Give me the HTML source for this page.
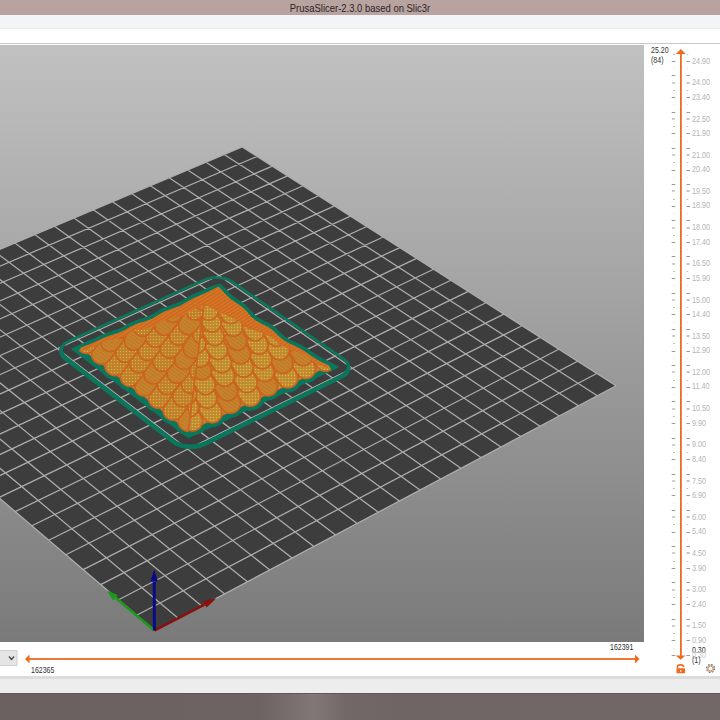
<!DOCTYPE html>
<html><head><meta charset="utf-8">
<style>
*{margin:0;padding:0;box-sizing:border-box}
html,body{width:720px;height:720px;overflow:hidden;background:#fff;font-family:"Liberation Sans",sans-serif}
.abs{position:absolute}
#title{left:0;top:0;width:720px;height:15px;background:#b9a3a1;}
#title span{position:absolute;left:0;width:720px;top:1.6px;text-align:center;font-size:11px;line-height:13px;color:#2a2424;transform:scaleX(.86);transform-origin:360px 0;}
#menu{left:0;top:15px;width:720px;height:13px;background:#f3f4f7}
#tabs{left:0;top:28px;width:720px;height:15px;background:#fff;border-top:1px solid #ececee}
#line{left:0;top:43px;width:720px;height:1px;background:#c9c9c9}
#canvas{left:0;top:45px;width:644px;height:597px;background:linear-gradient(#c1c1c1,#7a7a7a);overflow:hidden}
#right{left:644px;top:45px;width:76px;height:631px;background:#fff}
#bottom{left:0;top:642px;width:644px;height:34px;background:#fff}
#sep{left:0;top:676px;width:720px;height:3px;background:#dcdcdc}
#status{left:0;top:679px;width:720px;height:14px;background:#ededed}
#task{left:0;top:693px;width:720px;height:27px;background:linear-gradient(90deg,#6c6161 0%,#6e6363 36%,#776d6d 40%,#827878 43.5%,#7d7373 45%,#726868 48%,#6f6565 55%,#726868 100%);border-top:1px solid #5f5656}
.tl{position:absolute;left:692px;font-size:9px;line-height:11px;color:#b4b4b4;transform:scaleX(.8);transform-origin:0 0;white-space:nowrap}
.bl{position:absolute;font-size:9px;line-height:11px;color:#303030;transform:scaleX(.78);transform-origin:0 0;white-space:nowrap}
</style></head><body>
<div id="title" class="abs"><span>PrusaSlicer-2.3.0 based on Slic3r</span></div>
<div id="menu" class="abs"></div>
<div id="tabs" class="abs"></div>
<div id="line" class="abs"></div>
<div id="canvas" class="abs">
<svg class="abs" style="left:0;top:-45px" width="644" height="720" viewBox="0 0 644 720">
<polygon points="155.1,630.9 616.0,385.8 242.2,146.9 -195.5,331.8" fill="#3d3d3d"/>
<path d="M155.1,630.9 L-195.5,331.8 M155.1,630.9 L616.0,385.8 M178.5,618.4 L-173.5,322.6 M136.7,615.2 L596.7,373.5 M201.7,606.1 L-151.8,313.4 M118.6,599.8 L577.6,361.3 M224.7,593.9 L-130.2,304.3 M100.7,584.6 L558.8,349.3 M247.4,581.8 L-108.9,295.3 M83.2,569.6 L540.3,337.4 M269.8,569.9 L-87.8,286.3 M65.8,554.8 L521.9,325.7 M292.0,558.1 L-66.9,277.5 M48.7,540.2 L503.8,314.1 M313.9,546.4 L-46.2,268.8 M31.9,525.8 L485.9,302.7 M335.6,534.9 L-25.7,260.1 M15.2,511.6 L468.3,291.4 M357.1,523.5 L-5.3,251.5 M-1.2,497.6 L450.9,280.3 M378.3,512.2 L14.8,243.0 M-17.3,483.8 L433.6,269.2 M399.3,501.0 L34.7,234.6 M-33.3,470.2 L416.6,258.4 M420.0,490.0 L54.5,226.2 M-49.0,456.8 L399.8,247.6 M440.6,479.1 L74.0,218.0 M-64.6,443.5 L383.2,237.0 M460.9,468.3 L93.4,209.8 M-79.9,430.5 L366.8,226.5 M481.0,457.6 L112.6,201.7 M-95.0,417.6 L350.6,216.1 M500.9,447.0 L131.6,193.6 M-109.9,404.8 L334.6,205.9 M520.6,436.5 L150.5,185.7 M-124.6,392.3 L318.7,195.8 M540.0,426.2 L169.2,177.8 M-139.2,379.9 L303.1,185.8 M559.3,415.9 L187.7,169.9 M-153.5,367.6 L287.6,175.9 M578.4,405.8 L206.0,162.2 M-167.7,355.6 L272.3,166.1 M597.3,395.7 L224.2,154.5 M-181.7,343.6 L257.2,156.4 M616.0,385.8 L242.2,146.9 M-195.5,331.8 L242.2,146.9" stroke="#adadad" stroke-width="1.25" fill="none"/>
<g stroke="#0a765b" stroke-linecap="round"><line x1="232.3" y1="281.9" x2="230.1" y2="280.6" stroke-width="2.64"/><line x1="230.1" y1="280.6" x2="227.5" y2="279.5" stroke-width="2.60"/><line x1="227.5" y1="279.5" x2="224.8" y2="278.6" stroke-width="2.60"/><line x1="224.8" y1="278.6" x2="221.8" y2="278.0" stroke-width="2.60"/><line x1="221.8" y1="278.0" x2="218.7" y2="277.7" stroke-width="2.60"/><line x1="218.7" y1="277.7" x2="215.5" y2="277.6" stroke-width="2.60"/><line x1="215.5" y1="277.6" x2="212.4" y2="277.8" stroke-width="2.60"/><line x1="212.4" y1="277.8" x2="209.4" y2="278.3" stroke-width="2.60"/><line x1="209.4" y1="278.3" x2="206.5" y2="279.1" stroke-width="2.60"/><line x1="206.5" y1="279.1" x2="203.9" y2="280.1" stroke-width="2.60"/><line x1="203.9" y1="280.1" x2="69.5" y2="340.8" stroke-width="2.60"/><line x1="69.5" y1="340.8" x2="67.0" y2="342.1" stroke-width="2.62"/><line x1="67.0" y1="342.1" x2="64.9" y2="343.6" stroke-width="2.70"/><line x1="64.9" y1="343.6" x2="63.2" y2="345.2" stroke-width="2.81"/><line x1="63.2" y1="345.2" x2="62.0" y2="347.0" stroke-width="2.97"/><line x1="62.0" y1="347.0" x2="61.2" y2="348.9" stroke-width="3.20"/><line x1="61.2" y1="348.9" x2="61.0" y2="350.8" stroke-width="3.47"/><line x1="61.0" y1="350.8" x2="61.3" y2="352.7" stroke-width="3.77"/><line x1="61.3" y1="352.7" x2="62.1" y2="354.6" stroke-width="4.05"/><line x1="62.1" y1="354.6" x2="63.4" y2="356.3" stroke-width="4.27"/><line x1="63.4" y1="356.3" x2="65.1" y2="357.9" stroke-width="4.43"/><line x1="65.1" y1="357.9" x2="173.6" y2="441.7" stroke-width="4.49"/><line x1="173.6" y1="441.7" x2="175.9" y2="443.2" stroke-width="4.50"/><line x1="175.9" y1="443.2" x2="178.6" y2="444.5" stroke-width="4.50"/><line x1="178.6" y1="444.5" x2="181.6" y2="445.6" stroke-width="4.50"/><line x1="181.6" y1="445.6" x2="184.9" y2="446.3" stroke-width="4.50"/><line x1="184.9" y1="446.3" x2="188.2" y2="446.7" stroke-width="4.50"/><line x1="188.2" y1="446.7" x2="191.7" y2="446.8" stroke-width="4.50"/><line x1="191.7" y1="446.8" x2="195.1" y2="446.5" stroke-width="4.50"/><line x1="195.1" y1="446.5" x2="198.4" y2="445.9" stroke-width="4.50"/><line x1="198.4" y1="445.9" x2="201.5" y2="445.0" stroke-width="4.50"/><line x1="201.5" y1="445.0" x2="204.4" y2="443.9" stroke-width="4.50"/><line x1="204.4" y1="443.9" x2="341.5" y2="376.4" stroke-width="4.50"/><line x1="341.5" y1="376.4" x2="343.8" y2="375.1" stroke-width="4.50"/><line x1="343.8" y1="375.1" x2="345.7" y2="373.5" stroke-width="4.47"/><line x1="345.7" y1="373.5" x2="347.1" y2="371.8" stroke-width="4.33"/><line x1="347.1" y1="371.8" x2="348.1" y2="369.9" stroke-width="4.13"/><line x1="348.1" y1="369.9" x2="348.6" y2="368.0" stroke-width="3.87"/><line x1="348.6" y1="368.0" x2="348.5" y2="366.1" stroke-width="3.57"/><line x1="348.5" y1="366.1" x2="347.9" y2="364.1" stroke-width="3.29"/><line x1="347.9" y1="364.1" x2="346.9" y2="362.3" stroke-width="3.05"/><line x1="346.9" y1="362.3" x2="345.3" y2="360.5" stroke-width="2.87"/><line x1="345.3" y1="360.5" x2="343.3" y2="358.9" stroke-width="2.74"/><line x1="343.3" y1="358.9" x2="232.3" y2="281.9" stroke-width="2.69"/></g>
<pattern id="texB" width="3" height="3" patternUnits="userSpaceOnUse" patternTransform="rotate(-32)"><rect width="3" height="3" fill="#cc671f"/><rect x="0" y="0" width="3" height="1.2" fill="#d97a29"/></pattern>
<pattern id="tex" width="3" height="3" patternUnits="userSpaceOnUse"><rect width="3" height="3" fill="#c0872d"/><rect x="0" y="0" width="1" height="1" fill="#d6b046"/><rect x="1.5" y="1.5" width="1" height="1" fill="#c8641f"/></pattern>
<pattern id="texR" width="3" height="3" patternUnits="userSpaceOnUse"><rect width="3" height="3" fill="#c29233"/><rect x="0" y="0" width="1" height="1" fill="#d8b648"/><rect x="1.5" y="1.5" width="1" height="1" fill="#c56c22"/></pattern>
<pattern id="tex2" width="3" height="3" patternUnits="userSpaceOnUse" patternTransform="rotate(35)"><rect width="3" height="3" fill="#c2862d"/><rect x="0" y="0" width="3" height="1.1" fill="#c77326"/></pattern>
<g fill="#0a765b" stroke="#0a765b" stroke-width="9" stroke-linejoin="round"><polygon points="188.5,437.2 337.5,367.0 323.6,360.0 316.9,356.4 311.1,352.4 305.4,348.4 298.9,344.8 291.6,341.5 285.1,337.9 280.2,333.6 275.8,329.1 270.4,325.1 263.6,321.7 257.2,318.2 252.3,314.0 248.6,309.4 244.2,305.0 238.7,301.1 233.1,297.4 228.5,293.2 224.5,288.8 220.4,284.4 210.7,287.3 204.3,290.6 197.4,293.5 190.5,296.5 184.5,300.0 178.3,303.5 171.0,306.2 163.5,308.8 157.3,312.3 151.3,316.0 144.1,318.8 136.1,321.1 129.3,324.2 123.1,327.8 116.1,330.8 108.2,333.2 101.0,336.1 94.1,339.3 87.0,342.3 72.5,349.0" stroke-width="2"/><polygon points="199.6,423.4 196.8,427.1 194.5,429.4 191.6,430.8 188.3,431.3 185.1,430.7 182.2,429.2 180.0,426.9 178.5,423.9 178.1,420.7 178.6,417.5 180.2,414.6 183.0,410.9"/><polygon points="183.8,412.4 181.0,416.1 178.8,418.3 176.0,419.7 172.9,420.1 169.8,419.6 167.0,418.1 164.8,415.9 163.5,413.1 163.0,410.0 163.6,406.9 165.0,404.1 167.8,400.4"/><polygon points="168.6,400.8 165.9,404.4 163.7,406.5 161.0,407.8 158.1,408.3 155.1,407.7 152.5,406.3 150.4,404.2 149.1,401.5 148.6,398.6 149.2,395.6 150.6,393.0 153.3,389.3"/><polygon points="154.6,388.6 151.9,392.3 149.8,394.3 147.1,395.6 144.2,396.1 141.2,395.5 138.6,394.2 136.5,392.0 135.2,389.4 134.8,386.4 135.3,383.5 136.7,380.9 139.4,377.2"/><polygon points="140.0,379.0 137.3,382.6 135.2,384.6 132.6,385.9 129.6,386.4 126.7,385.8 124.1,384.5 122.1,382.4 120.8,379.7 120.4,376.8 120.9,373.9 122.2,371.3 124.9,367.7"/><polygon points="125.8,368.0 123.1,371.6 120.8,373.8 118.0,375.2 114.9,375.6 111.8,375.1 109.0,373.6 106.8,371.3 105.4,368.5 104.9,365.3 105.5,362.2 106.9,359.4 109.6,355.9"/><polygon points="112.2,356.6 109.5,360.1 107.3,362.3 104.5,363.7 101.4,364.1 98.3,363.6 95.5,362.1 93.3,359.9 92.0,357.1 91.5,354.0 92.1,350.9 93.5,348.1 96.2,344.6"/><polygon points="198.6,412.0 201.0,416.0 202.2,418.9 202.4,421.9 201.7,424.9 200.1,427.5 197.8,429.5 195.0,430.6 191.9,430.9 188.9,430.2 186.3,428.6 184.4,426.2 181.9,422.2"/><polygon points="218.1,403.9 220.6,407.9 221.7,410.7 222.0,413.8 221.3,416.7 219.6,419.4 217.3,421.4 214.5,422.5 211.4,422.8 208.4,422.0 205.8,420.4 203.8,418.1 201.4,414.1"/><polygon points="236.7,393.9 239.1,397.9 240.3,400.8 240.6,403.9 239.8,407.0 238.2,409.7 235.8,411.8 232.9,413.0 229.7,413.2 226.6,412.5 224.0,410.8 221.9,408.4 219.5,404.5"/><polygon points="256.7,386.8 259.1,390.7 260.3,393.7 260.6,396.8 259.8,399.9 258.2,402.7 255.7,404.7 252.8,405.9 249.6,406.2 246.5,405.4 243.8,403.8 241.7,401.3 239.3,397.4"/><polygon points="273.7,377.4 276.1,381.3 277.2,384.1 277.5,387.1 276.8,390.0 275.2,392.5 272.9,394.5 270.1,395.6 267.2,395.8 264.3,395.1 261.7,393.6 259.8,391.3 257.4,387.4"/><polygon points="294.0,368.9 296.4,372.7 297.6,375.6 297.8,378.7 297.1,381.8 295.4,384.5 293.0,386.5 290.1,387.7 287.0,388.0 283.9,387.2 281.2,385.6 279.2,383.2 276.8,379.4"/><polygon points="311.8,359.7 314.1,363.5 315.3,366.4 315.6,369.5 314.8,372.5 313.2,375.2 310.8,377.2 307.9,378.4 304.8,378.7 301.8,377.9 299.1,376.3 297.1,373.9 294.7,370.1"/></g>
<polygon points="188.5,431.0 329.0,366.0 321.7,362.6 315.0,359.0 309.2,355.0 303.5,351.0 297.0,347.4 289.7,344.1 283.2,340.5 278.3,336.2 273.9,331.7 268.5,327.7 261.7,324.3 255.3,320.8 250.4,316.6 246.7,312.0 242.3,307.6 236.8,303.7 231.2,300.0 226.6,295.8 222.6,291.4 218.5,287.0 212.1,290.2 205.7,293.5 198.8,296.4 191.9,299.4 185.9,302.9 179.7,306.4 172.4,309.1 164.9,311.7 158.7,315.2 152.7,318.9 145.5,321.7 137.5,324.0 130.7,327.1 124.5,330.7 117.5,333.7 109.6,336.1 102.4,339.0 95.5,342.2 88.4,345.2 81.0,348.0" fill="url(#tex)" stroke="#cb631f" stroke-width="1"/>
<clipPath id="cL"><polygon points="218.5,287.0 212.1,290.2 205.7,293.5 198.8,296.4 191.9,299.4 185.9,302.9 179.7,306.4 172.4,309.1 164.9,311.7 158.7,315.2 152.7,318.9 145.5,321.7 137.5,324.0 130.7,327.1 124.5,330.7 117.5,333.7 109.6,336.1 102.4,339.0 95.5,342.2 88.4,345.2 81.0,348.0 76.2,354.4 183.7,439.4 188.5,431.0 204.2,304.2"/></clipPath>
<g clip-path="url(#cL)" stroke="#cb631f" stroke-width="1.7" stroke-linejoin="round"><polygon points="203.9,417.7 196.8,427.1 194.5,429.4 191.6,430.8 188.3,431.3 185.1,430.7 182.2,429.2 180.0,426.9 178.5,423.9 178.1,420.7 178.6,417.5 180.2,414.6 187.2,405.2" fill="url(#tex2)"/><polygon points="188.0,406.8 181.0,416.1 178.8,418.3 176.0,419.7 172.9,420.1 169.8,419.6 167.0,418.1 164.8,415.9 163.5,413.1 163.0,410.0 163.6,406.9 165.0,404.1 172.0,394.8" fill="url(#tex)"/><polygon points="172.7,395.2 165.9,404.4 163.7,406.5 161.0,407.8 158.1,408.3 155.1,407.7 152.5,406.3 150.4,404.2 149.1,401.5 148.6,398.6 149.2,395.6 150.6,393.0 157.4,383.8" fill="url(#tex)"/><polygon points="158.7,383.2 151.9,392.3 149.8,394.3 147.1,395.6 144.2,396.1 141.2,395.5 138.6,394.2 136.5,392.0 135.2,389.4 134.8,386.4 135.3,383.5 136.7,380.9 143.5,371.8" fill="url(#tex2)"/><polygon points="144.1,373.6 137.3,382.6 135.2,384.6 132.6,385.9 129.6,386.4 126.7,385.8 124.1,384.5 122.1,382.4 120.8,379.7 120.4,376.8 120.9,373.9 122.2,371.3 129.0,362.3" fill="url(#tex)"/><polygon points="129.8,362.7 123.1,371.6 120.8,373.8 118.0,375.2 114.9,375.6 111.8,375.1 109.0,373.6 106.8,371.3 105.4,368.5 104.9,365.3 105.5,362.2 106.9,359.4 113.6,350.6" fill="url(#tex)"/><polygon points="116.1,351.4 109.5,360.1 107.3,362.3 104.5,363.7 101.4,364.1 98.3,363.6 95.5,362.1 93.3,359.9 92.0,357.1 91.5,354.0 92.1,350.9 93.5,348.1 100.1,339.4" fill="url(#tex2)"/><polygon points="100.3,341.1 93.8,349.8 91.7,351.8 89.1,353.1 86.3,353.5 83.4,353.0 80.9,351.6 78.8,349.5 77.6,346.9 77.2,344.1 77.7,341.2 79.0,338.7 85.5,330.0" fill="url(#tex)"/><polygon points="227.0,415.7 219.9,425.1 217.7,427.3 214.8,428.7 211.7,429.1 208.6,428.6 205.9,427.1 203.7,424.9 202.3,422.0 201.8,418.9 202.4,415.8 203.9,413.1 210.9,403.7" fill="url(#tex2)"/><polygon points="213.3,404.6 206.3,413.8 204.0,416.1 201.2,417.5 198.0,417.9 194.9,417.4 192.0,415.9 189.8,413.6 188.4,410.7 188.0,407.6 188.5,404.4 190.0,401.6 196.9,392.3" fill="url(#tex)"/><polygon points="197.8,393.6 190.9,402.8 188.7,405.0 185.8,406.3 182.7,406.8 179.6,406.2 176.8,404.8 174.7,402.5 173.3,399.7 172.8,396.6 173.4,393.5 174.8,390.7 181.7,381.5" fill="url(#tex)"/><polygon points="181.4,381.5 174.6,390.6 172.5,392.7 169.8,394.0 166.8,394.4 163.8,393.9 161.2,392.5 159.1,390.4 157.8,387.7 157.4,384.7 157.9,381.7 159.3,379.1 166.1,370.0" fill="url(#tex)"/><polygon points="167.9,371.2 161.2,380.2 159.1,382.3 156.4,383.6 153.4,384.0 150.5,383.5 147.8,382.1 145.7,380.0 144.4,377.3 144.0,374.3 144.5,371.3 145.9,368.7 152.6,359.7" fill="url(#tex2)"/><polygon points="153.1,360.3 146.5,369.1 144.3,371.2 141.7,372.5 138.8,372.9 135.8,372.4 133.2,371.0 131.2,368.9 129.9,366.3 129.4,363.3 129.9,360.4 131.3,357.8 138.0,349.0" fill="url(#tex)"/><polygon points="139.0,349.9 132.4,358.6 130.3,360.6 127.7,361.9 124.8,362.3 122.0,361.8 119.4,360.5 117.4,358.4 116.1,355.8 115.7,352.9 116.2,350.0 117.5,347.5 124.1,338.7" fill="url(#tex)"/><polygon points="124.6,339.1 118.2,347.7 116.0,349.9 113.2,351.2 110.2,351.7 107.2,351.1 104.5,349.7 102.4,347.5 101.0,344.8 100.6,341.7 101.1,338.7 102.5,336.0 109.0,327.4" fill="url(#tex2)"/><polygon points="237.0,403.3 230.1,412.6 227.7,414.9 224.7,416.3 221.5,416.8 218.2,416.2 215.3,414.7 213.0,412.3 211.5,409.3 211.0,406.1 211.6,402.8 213.2,399.9 220.1,390.6" fill="url(#tex2)"/><polygon points="220.4,392.1 213.5,401.3 211.2,403.5 208.4,404.9 205.2,405.4 202.0,404.8 199.2,403.3 197.0,401.0 195.6,398.1 195.1,395.0 195.7,391.8 197.2,389.0 204.0,379.8" fill="url(#tex2)"/><polygon points="204.8,380.6 198.1,389.7 195.9,391.7 193.3,393.0 190.4,393.4 187.5,392.9 184.9,391.5 182.8,389.4 181.5,386.8 181.1,383.9 181.6,381.0 183.0,378.4 189.8,369.3" fill="url(#tex)"/><polygon points="191.4,370.4 184.7,379.3 182.5,381.5 179.7,382.8 176.7,383.3 173.6,382.7 170.9,381.3 168.8,379.1 167.4,376.3 167.0,373.3 167.5,370.3 168.9,367.5 175.7,358.6" fill="url(#tex2)"/><polygon points="177.1,358.6 170.5,367.4 168.3,369.5 165.5,370.9 162.5,371.3 159.5,370.8 156.7,369.4 154.6,367.2 153.2,364.4 152.8,361.4 153.3,358.3 154.8,355.6 161.4,346.8" fill="url(#tex)"/><polygon points="161.7,348.1 155.2,356.8 153.1,358.9 150.4,360.2 147.5,360.6 144.5,360.1 141.9,358.7 139.9,356.6 138.6,353.9 138.1,351.0 138.6,348.1 140.0,345.4 146.6,336.7" fill="url(#tex)"/><polygon points="147.8,338.1 141.3,346.7 139.2,348.7 136.6,350.0 133.7,350.4 130.8,349.9 128.2,348.6 126.1,346.5 124.8,343.8 124.4,340.9 124.9,338.0 126.3,335.4 132.8,326.8" fill="url(#tex2)"/><polygon points="133.2,325.8 126.9,334.3 124.7,336.3 122.1,337.6 119.1,338.1 116.2,337.5 113.6,336.2 111.5,334.0 110.2,331.4 109.8,328.4 110.3,325.5 111.7,322.9 118.1,314.4" fill="url(#tex2)"/><polygon points="229.8,380.4 223.1,389.4 220.8,391.6 217.9,393.1 214.8,393.5 211.6,393.0 208.8,391.5 206.6,389.2 205.2,386.3 204.7,383.2 205.3,380.0 206.8,377.2 213.6,368.2" fill="url(#tex)"/><polygon points="213.9,368.0 207.2,376.9 205.0,379.1 202.2,380.4 199.2,380.9 196.1,380.3 193.4,378.9 191.2,376.7 189.9,373.9 189.4,370.8 190.0,367.8 191.4,365.0 198.1,356.1" fill="url(#tex)"/><polygon points="198.1,356.9 191.5,365.7 189.4,367.7 186.8,369.0 183.9,369.4 181.1,368.9 178.5,367.6 176.5,365.5 175.2,362.9 174.8,360.0 175.3,357.1 176.6,354.5 183.3,345.7" fill="url(#tex2)"/><polygon points="184.0,345.6 177.5,354.3 175.3,356.4 172.6,357.7 169.6,358.1 166.6,357.6 163.9,356.2 161.7,354.0 160.4,351.3 160.0,348.3 160.5,345.3 161.9,342.6 168.4,333.9" fill="url(#tex)"/><polygon points="169.2,335.0 162.7,343.6 160.6,345.6 158.0,346.9 155.2,347.3 152.3,346.8 149.7,345.4 147.7,343.3 146.4,340.7 146.0,337.8 146.5,335.0 147.9,332.4 154.3,323.8" fill="url(#tex)"/><polygon points="156.2,324.0 149.9,332.5 147.8,334.5 145.2,335.8 142.4,336.2 139.5,335.7 137.0,334.3 135.0,332.3 133.7,329.7 133.3,326.8 133.8,324.0 135.1,321.4 141.5,313.0" fill="url(#tex)"/><polygon points="237.9,367.4 231.2,376.3 228.9,378.5 226.1,379.9 223.0,380.3 219.9,379.8 217.1,378.3 214.9,376.1 213.6,373.2 213.1,370.1 213.7,367.0 215.1,364.3 221.8,355.4" fill="url(#tex2)"/><polygon points="223.1,355.0 216.5,363.8 214.4,365.8 211.7,367.2 208.8,367.6 205.9,367.1 203.2,365.7 201.2,363.5 199.8,360.9 199.4,357.9 199.9,355.0 201.3,352.4 207.9,343.6" fill="url(#tex2)"/><polygon points="207.7,345.6 201.2,354.3 198.9,356.5 196.2,357.9 193.1,358.3 190.0,357.8 187.3,356.3 185.1,354.1 183.8,351.3 183.3,348.2 183.8,345.2 185.3,342.4 191.8,333.7" fill="url(#tex2)"/><polygon points="192.0,333.1 185.6,341.6 183.5,343.6 181.0,344.9 178.1,345.3 175.3,344.8 172.8,343.5 170.8,341.4 169.6,338.9 169.2,336.0 169.7,333.2 171.0,330.7 177.4,322.1" fill="url(#tex)"/><polygon points="177.9,323.2 171.5,331.7 169.4,333.7 166.8,335.0 163.9,335.4 161.0,334.9 158.4,333.6 156.4,331.5 155.1,328.9 154.7,326.0 155.2,323.1 156.6,320.5 162.9,312.0" fill="url(#tex2)"/><polygon points="163.4,311.6 157.1,320.0 155.1,322.0 152.5,323.2 149.7,323.6 146.9,323.1 144.4,321.8 142.4,319.8 141.2,317.2 140.8,314.4 141.3,311.6 142.6,309.1 148.9,300.8" fill="url(#tex2)"/><polygon points="245.7,354.2 239.1,363.0 236.9,365.1 234.1,366.5 231.0,367.0 227.9,366.4 225.1,365.0 222.9,362.7 221.6,359.9 221.1,356.8 221.7,353.7 223.1,351.0 229.7,342.2" fill="url(#tex)"/><polygon points="231.1,343.0 224.6,351.7 222.5,353.8 219.8,355.1 216.8,355.5 213.9,355.0 211.2,353.6 209.1,351.5 207.8,348.8 207.4,345.8 207.9,342.9 209.3,340.2 215.8,331.5" fill="url(#tex)"/><polygon points="216.5,331.5 210.0,340.1 207.9,342.2 205.1,343.5 202.1,344.0 199.1,343.4 196.4,342.0 194.3,339.8 193.0,337.1 192.6,334.1 193.1,331.1 194.5,328.4 200.9,319.9" fill="url(#tex)"/><polygon points="201.9,322.5 195.6,330.9 193.4,333.0 190.8,334.3 187.8,334.7 184.9,334.2 182.3,332.8 180.2,330.7 178.9,328.0 178.5,325.1 179.0,322.1 180.4,319.5 186.7,311.0" fill="url(#tex2)"/><polygon points="186.1,310.6 179.8,319.0 177.9,320.9 175.4,322.1 172.7,322.5 170.0,322.0 167.6,320.7 165.7,318.7 164.5,316.3 164.1,313.6 164.5,310.9 165.8,308.4 172.1,300.1" fill="url(#tex2)"/><polygon points="238.7,329.4 232.3,337.9 230.3,339.9 227.8,341.1 225.0,341.5 222.3,341.0 219.8,339.7 217.9,337.7 216.6,335.2 216.2,332.5 216.7,329.7 218.0,327.2 224.4,318.7" fill="url(#tex)"/><polygon points="223.2,319.1 216.9,327.6 214.9,329.5 212.3,330.8 209.5,331.2 206.7,330.7 204.2,329.4 202.3,327.3 201.0,324.8 200.6,322.0 201.1,319.2 202.4,316.7 208.7,308.3" fill="url(#tex)"/><polygon points="208.1,308.2 201.9,316.5 199.9,318.4 197.4,319.6 194.7,320.0 192.0,319.5 189.6,318.3 187.7,316.3 186.5,313.8 186.1,311.1 186.6,308.4 187.8,306.0 194.1,297.6" fill="url(#tex)"/><polygon points="193.6,298.4 187.5,306.6 185.5,308.5 183.1,309.7 180.5,310.1 177.8,309.6 175.5,308.4 173.6,306.4 172.4,304.0 172.1,301.4 172.5,298.7 173.8,296.4 179.9,288.1" fill="url(#tex2)"/><polygon points="247.3,318.3 240.9,326.7 238.9,328.6 236.5,329.8 233.7,330.2 231.0,329.8 228.5,328.5 226.6,326.5 225.4,324.0 225.0,321.2 225.4,318.5 226.7,316.0 233.1,307.6" fill="url(#tex2)"/><polygon points="231.4,307.3 225.2,315.6 223.1,317.6 220.6,318.8 217.9,319.2 215.1,318.7 212.6,317.4 210.7,315.4 209.4,312.9 209.0,310.1 209.5,307.4 210.8,304.9 217.1,296.6" fill="url(#tex)"/><polygon points="217.0,298.2 210.8,306.5 208.7,308.5 206.0,309.8 203.1,310.2 200.2,309.7 197.6,308.4 195.6,306.2 194.3,303.6 193.9,300.7 194.4,297.8 195.7,295.2 201.9,286.9" fill="url(#tex)"/><polygon points="239.6,295.4 233.4,303.6 231.5,305.5 229.1,306.6 226.5,307.0 223.8,306.6 221.4,305.3 219.6,303.4 218.4,301.0 218.0,298.3 218.5,295.7 219.7,293.3 225.9,285.1" fill="url(#tex2)"/><polygon points="224.4,284.9 218.3,293.0 216.4,294.9 214.0,296.1 211.3,296.4 208.6,296.0 206.2,294.7 204.4,292.8 203.2,290.3 202.8,287.7 203.3,285.0 204.5,282.6 210.6,274.5" fill="url(#tex)"/></g>
<clipPath id="cR"><polygon points="218.5,287.0 222.6,291.4 226.6,295.8 231.2,300.0 236.8,303.7 242.3,307.6 246.7,312.0 250.4,316.6 255.3,320.8 261.7,324.3 268.5,327.7 273.9,331.7 278.3,336.2 283.2,340.5 289.7,344.1 297.0,347.4 303.5,351.0 309.2,355.0 315.0,359.0 321.7,362.6 329.0,366.0 333.2,372.8 192.7,439.8 188.5,431.0 204.2,304.2"/></clipPath>
<g clip-path="url(#cR)" stroke="#cb631f" stroke-width="1.7" stroke-linejoin="round"><polygon points="194.9,406.0 201.0,416.0 202.2,418.9 202.4,421.9 201.7,424.9 200.1,427.5 197.8,429.5 195.0,430.6 191.9,430.9 188.9,430.2 186.3,428.6 184.4,426.2 178.2,416.2" fill="url(#texR)"/><polygon points="214.5,397.9 220.6,407.9 221.7,410.7 222.0,413.8 221.3,416.7 219.6,419.4 217.3,421.4 214.5,422.5 211.4,422.8 208.4,422.0 205.8,420.4 203.8,418.1 197.7,408.2" fill="url(#texR)"/><polygon points="233.1,388.0 239.1,397.9 240.3,400.8 240.6,403.9 239.8,407.0 238.2,409.7 235.8,411.8 232.9,413.0 229.7,413.2 226.6,412.5 224.0,410.8 221.9,408.4 215.9,398.6" fill="url(#tex2)"/><polygon points="253.1,380.9 259.1,390.7 260.3,393.7 260.6,396.8 259.8,399.9 258.2,402.7 255.7,404.7 252.8,405.9 249.6,406.2 246.5,405.4 243.8,403.8 241.7,401.3 235.8,391.6" fill="url(#texR)"/><polygon points="270.2,371.6 276.1,381.3 277.2,384.1 277.5,387.1 276.8,390.0 275.2,392.5 272.9,394.5 270.1,395.6 267.2,395.8 264.3,395.1 261.7,393.6 259.8,391.3 253.8,381.6" fill="url(#tex2)"/><polygon points="290.5,363.1 296.4,372.7 297.6,375.6 297.8,378.7 297.1,381.8 295.4,384.5 293.0,386.5 290.1,387.7 287.0,388.0 283.9,387.2 281.2,385.6 279.2,383.2 273.3,373.6" fill="url(#texR)"/><polygon points="308.3,354.0 314.1,363.5 315.3,366.4 315.6,369.5 314.8,372.5 313.2,375.2 310.8,377.2 307.9,378.4 304.8,378.7 301.8,377.9 299.1,376.3 297.1,373.9 291.3,364.4" fill="url(#texR)"/><polygon points="328.2,346.8 334.0,356.2 335.2,359.0 335.4,362.1 334.7,365.2 333.1,367.8 330.7,369.8 327.8,371.0 324.7,371.2 321.7,370.5 319.1,368.9 317.1,366.5 311.3,357.1" fill="url(#texR)"/><polygon points="172.8,401.9 178.9,411.8 180.1,414.7 180.3,417.8 179.6,420.8 178.0,423.5 175.6,425.5 172.7,426.7 169.6,426.9 166.6,426.2 164.0,424.6 162.0,422.2 155.8,412.2" fill="url(#texR)"/><polygon points="191.3,392.5 197.3,402.4 198.5,405.2 198.7,408.2 198.0,411.1 196.4,413.7 194.1,415.6 191.3,416.8 188.3,417.0 185.4,416.3 182.8,414.8 180.9,412.5 174.8,402.6" fill="url(#texR)"/><polygon points="209.6,383.6 215.6,393.4 216.8,396.2 217.0,399.3 216.3,402.2 214.7,404.8 212.4,406.8 209.5,408.0 206.5,408.2 203.5,407.5 200.9,405.9 198.9,403.6 192.9,393.8" fill="url(#texR)"/><polygon points="230.1,376.2 236.1,385.9 237.2,388.8 237.5,391.9 236.8,394.9 235.1,397.5 232.8,399.5 229.9,400.7 226.8,400.9 223.8,400.2 221.2,398.6 219.2,396.2 213.2,386.5" fill="url(#tex2)"/><polygon points="249.9,367.4 255.8,377.1 257.1,380.1 257.3,383.3 256.6,386.4 254.9,389.1 252.4,391.2 249.4,392.5 246.2,392.7 243.1,392.0 240.4,390.3 238.3,387.8 232.4,378.2" fill="url(#texR)"/><polygon points="267.0,357.8 272.8,367.3 274.0,370.1 274.2,373.0 273.5,375.9 271.9,378.4 269.7,380.4 266.9,381.5 264.0,381.7 261.1,381.0 258.6,379.5 256.7,377.2 250.8,367.7" fill="url(#texR)"/><polygon points="285.7,349.1 291.5,358.5 292.6,361.4 292.9,364.4 292.2,367.4 290.6,370.0 288.2,372.0 285.4,373.1 282.4,373.4 279.4,372.7 276.8,371.1 274.8,368.7 269.0,359.3" fill="url(#tex2)"/><polygon points="305.6,342.0 311.3,351.4 312.5,354.1 312.7,357.1 312.0,360.0 310.4,362.6 308.1,364.5 305.4,365.6 302.4,365.9 299.5,365.2 297.0,363.6 295.0,361.3 289.3,352.0" fill="url(#tex2)"/><polygon points="169.5,388.3 175.5,398.1 176.6,400.9 176.9,403.9 176.2,406.8 174.6,409.4 172.3,411.4 169.5,412.5 166.5,412.8 163.5,412.0 161.0,410.5 159.0,408.2 153.0,398.3" fill="url(#tex2)"/><polygon points="189.2,379.5 195.2,389.2 196.4,392.2 196.6,395.4 195.9,398.5 194.2,401.3 191.8,403.4 188.8,404.6 185.6,404.8 182.5,404.1 179.7,402.4 177.7,400.0 171.7,390.2" fill="url(#texR)"/><polygon points="207.9,370.4 213.8,380.0 214.9,382.8 215.2,385.8 214.5,388.7 212.9,391.2 210.6,393.2 207.9,394.3 204.9,394.6 202.0,393.9 199.4,392.3 197.5,390.0 191.6,380.4" fill="url(#texR)"/><polygon points="227.4,361.3 233.3,370.8 234.5,373.7 234.7,376.9 234.0,379.9 232.3,382.6 229.9,384.7 227.0,385.9 223.9,386.1 220.8,385.4 218.1,383.7 216.1,381.3 210.2,371.8" fill="url(#texR)"/><polygon points="246.3,353.1 252.1,362.6 253.2,365.4 253.4,368.4 252.7,371.3 251.2,373.8 248.9,375.8 246.1,376.9 243.1,377.2 240.2,376.5 237.6,374.9 235.7,372.6 229.9,363.1" fill="url(#texR)"/><polygon points="264.7,345.5 270.5,354.8 271.6,357.5 271.8,360.4 271.1,363.3 269.6,365.7 267.4,367.6 264.7,368.7 261.8,369.0 259.0,368.3 256.5,366.8 254.6,364.5 248.9,355.2" fill="url(#texR)"/><polygon points="282.3,335.6 288.0,344.9 289.2,347.7 289.4,350.8 288.7,353.8 287.1,356.5 284.7,358.5 281.8,359.6 278.8,359.9 275.8,359.2 273.1,357.5 271.1,355.2 265.4,345.9" fill="url(#texR)"/><polygon points="302.1,327.3 307.7,336.5 308.9,339.3 309.1,342.3 308.4,345.3 306.8,347.9 304.5,349.8 301.7,351.0 298.7,351.2 295.7,350.5 293.1,348.9 291.1,346.6 285.5,337.4" fill="url(#tex2)"/><polygon points="186.5,365.7 192.4,375.3 193.5,378.1 193.8,381.1 193.1,384.0 191.5,386.6 189.2,388.6 186.4,389.7 183.4,390.0 180.4,389.3 177.8,387.7 175.9,385.4 170.0,375.8" fill="url(#texR)"/><polygon points="204.3,356.3 210.1,365.8 211.2,368.5 211.4,371.4 210.8,374.2 209.2,376.7 207.0,378.5 204.4,379.6 201.5,379.9 198.7,379.2 196.2,377.7 194.3,375.5 188.5,366.0" fill="url(#tex2)"/><polygon points="224.4,348.6 230.2,358.1 231.3,360.9 231.5,363.9 230.8,366.8 229.3,369.4 227.0,371.4 224.2,372.5 221.1,372.8 218.2,372.0 215.6,370.5 213.7,368.2 207.9,358.7" fill="url(#texR)"/><polygon points="243.3,339.7 249.0,349.0 250.2,351.9 250.4,354.9 249.7,358.0 248.1,360.6 245.7,362.6 242.9,363.8 239.8,364.0 236.8,363.3 234.1,361.7 232.1,359.3 226.4,350.0" fill="url(#tex2)"/><polygon points="261.2,331.2 266.9,340.4 268.0,343.1 268.2,346.0 267.5,348.8 266.0,351.2 263.8,353.1 261.1,354.2 258.3,354.4 255.5,353.7 253.0,352.2 251.1,350.0 245.5,340.8" fill="url(#texR)"/><polygon points="278.9,322.8 284.5,331.9 285.7,334.7 285.9,337.6 285.2,340.5 283.6,343.0 281.4,344.9 278.7,346.0 275.7,346.3 272.8,345.6 270.3,344.0 268.4,341.8 262.8,332.6" fill="url(#texR)"/><polygon points="182.0,351.9 187.8,361.4 188.9,364.1 189.1,367.0 188.4,369.8 186.9,372.3 184.7,374.2 182.0,375.3 179.1,375.5 176.2,374.8 173.7,373.3 171.9,371.1 166.1,361.6" fill="url(#tex2)"/><polygon points="202.4,343.2 208.1,352.6 209.2,355.3 209.5,358.3 208.8,361.2 207.2,363.8 204.9,365.7 202.2,366.8 199.2,367.1 196.3,366.4 193.8,364.8 191.8,362.5 186.1,353.2" fill="url(#texR)"/><polygon points="220.4,336.0 226.1,345.3 227.2,348.0 227.4,350.9 226.8,353.8 225.2,356.3 223.0,358.2 220.2,359.3 217.3,359.6 214.4,358.9 211.9,357.3 210.0,355.1 204.3,345.8" fill="url(#texR)"/><polygon points="239.8,326.8 245.4,336.0 246.5,338.7 246.8,341.7 246.1,344.5 244.5,347.1 242.3,349.0 239.6,350.1 236.6,350.3 233.7,349.6 231.2,348.1 229.3,345.9 223.7,336.7" fill="url(#tex2)"/><polygon points="257.4,317.6 263.0,326.7 264.1,329.4 264.3,332.3 263.7,335.1 262.1,337.6 259.9,339.5 257.3,340.6 254.4,340.8 251.6,340.1 249.1,338.6 247.2,336.4 241.7,327.3" fill="url(#texR)"/><polygon points="275.5,309.2 281.0,318.2 282.1,321.0 282.3,323.9 281.6,326.8 280.1,329.4 277.8,331.3 275.1,332.4 272.1,332.7 269.2,332.0 266.7,330.4 264.8,328.1 259.3,319.1" fill="url(#texR)"/><polygon points="179.4,338.5 185.1,347.8 186.3,350.6 186.5,353.6 185.8,356.6 184.2,359.2 181.9,361.2 179.0,362.3 176.0,362.6 173.0,361.9 170.4,360.3 168.5,358.0 162.8,348.6" fill="url(#texR)"/><polygon points="198.7,330.0 204.4,339.2 205.5,341.9 205.7,344.9 205.0,347.7 203.5,350.3 201.2,352.2 198.5,353.3 195.5,353.5 192.7,352.9 190.1,351.3 188.2,349.1 182.6,339.8" fill="url(#texR)"/><polygon points="217.0,322.8 222.6,331.9 223.7,334.5 223.9,337.3 223.2,340.1 221.8,342.5 219.6,344.3 217.0,345.4 214.2,345.6 211.5,344.9 209.1,343.5 207.3,341.3 201.7,332.2" fill="url(#texR)"/><polygon points="235.7,313.4 241.2,322.5 242.3,325.1 242.5,327.9 241.9,330.7 240.4,333.1 238.2,334.9 235.6,336.0 232.8,336.2 230.0,335.6 227.6,334.1 225.8,331.9 220.2,322.9" fill="url(#texR)"/><polygon points="254.8,305.6 260.3,314.6 261.4,317.3 261.6,320.1 260.9,323.0 259.4,325.4 257.2,327.3 254.5,328.4 251.6,328.6 248.8,327.9 246.4,326.4 244.5,324.2 239.0,315.3" fill="url(#texR)"/><polygon points="196.1,318.1 201.7,327.2 202.8,329.9 203.0,332.8 202.3,335.6 200.8,338.1 198.6,340.0 195.9,341.1 193.0,341.3 190.2,340.6 187.8,339.1 185.9,336.9 180.3,327.8" fill="url(#texR)"/><polygon points="214.4,309.1 219.9,318.1 221.0,320.8 221.2,323.7 220.6,326.5 219.1,328.9 216.9,330.8 214.2,331.9 211.3,332.1 208.5,331.4 206.0,329.9 204.2,327.7 198.7,318.7" fill="url(#texR)"/><polygon points="233.0,300.8 238.5,309.8 239.6,312.4 239.8,315.3 239.1,318.1 237.6,320.5 235.4,322.4 232.8,323.4 229.9,323.7 227.1,323.0 224.7,321.5 222.8,319.3 217.4,310.4" fill="url(#texR)"/><polygon points="251.0,293.6 256.5,302.5 257.6,305.1 257.8,308.0 257.1,310.8 255.6,313.3 253.4,315.2 250.7,316.3 247.9,316.5 245.0,315.8 242.6,314.3 240.7,312.1 235.3,303.3" fill="url(#texR)"/><polygon points="193.3,305.4 198.8,314.4 199.8,316.9 200.1,319.7 199.4,322.5 197.9,324.9 195.8,326.7 193.2,327.7 190.4,328.0 187.7,327.3 185.3,325.8 183.5,323.7 178.0,314.7" fill="url(#texR)"/><polygon points="211.5,297.0 217.0,305.9 218.1,308.6 218.3,311.5 217.6,314.4 216.1,316.9 213.9,318.8 211.1,319.9 208.2,320.2 205.4,319.5 202.8,317.9 200.9,315.7 195.5,306.8" fill="url(#texR)"/><polygon points="228.7,287.5 234.1,296.3 235.2,298.9 235.4,301.7 234.7,304.4 233.3,306.8 231.1,308.6 228.5,309.6 225.8,309.9 223.0,309.2 220.7,307.7 218.9,305.6 213.5,296.8" fill="url(#texR)"/><polygon points="207.0,283.3 212.3,292.1 213.3,294.5 213.6,297.2 212.9,299.8 211.5,302.1 209.5,303.8 207.0,304.8 204.4,305.1 201.7,304.4 199.5,303.0 197.7,301.0 192.4,292.3" fill="url(#tex2)"/><polygon points="227.0,276.0 232.3,284.7 233.4,287.4 233.7,290.2 233.0,293.0 231.5,295.5 229.3,297.4 226.6,298.5 223.8,298.7 221.0,298.0 218.5,296.5 216.6,294.3 211.3,285.6" fill="url(#tex2)"/></g>
<path d="M188.5,431.0 L204.2,304.2" stroke="#cb631f" stroke-width="1.6" fill="none"/>
<polygon points="81.0,348.0 87.1,345.6 93.2,343.2 98.9,340.6 104.7,338.0 110.9,335.7 117.5,333.7 123.4,331.3 128.6,328.3 133.9,325.4 140.1,323.2 146.8,321.3 152.7,318.9 157.7,315.8 162.7,312.7 168.6,310.3 175.0,308.3 180.8,305.9 185.9,302.9 190.9,299.9 196.4,297.3 202.3,295.0 207.9,292.4 213.1,289.7 218.5,287.0 221.9,290.6 225.2,294.3 228.8,297.9 233.0,301.3 237.8,304.4 242.3,307.6 246.0,311.2 249.1,315.1 252.6,318.8 257.3,322.0 262.9,324.9 268.5,327.7 273.1,331.0 276.9,334.7 280.5,338.4 285.2,341.8 290.9,344.6 297.0,347.4 302.5,350.3 307.4,353.6 312.0,357.0 317.2,360.3 322.9,363.2 329.0,366.0 327.5,368.0 321.0,366.0 315.2,363.0 310.5,359.2 306.1,355.5 300.9,352.7 294.6,350.7 288.1,348.6 282.3,345.8 277.7,342.4 273.8,339.0 269.4,336.3 263.9,334.0 257.8,331.9 252.0,329.5 246.9,326.8 242.8,323.9 238.8,321.3 234.3,318.8 229.1,316.4 223.7,314.3 218.7,312.0 214.2,309.7 210.0,307.3 204.2,304.2 200.9,307.5 194.8,308.7 189.5,311.0 184.6,314.3 178.8,316.9 172.0,318.2 165.6,319.3 160.4,321.9 155.6,325.3 149.7,327.9 142.7,328.9 135.9,329.9 130.5,332.5 125.5,335.9 119.6,338.5 112.6,339.5 105.9,340.7 100.1,343.1 94.6,346.4 88.6,348.8 82.0,350.3" fill="url(#texB)"/>
<line x1="154.4" y1="630.6" x2="115.5" y2="597.8" stroke="#1a9a1a" stroke-width="2.6"/><polygon points="106.7,590.4 117.9,595.0 113.1,600.6" fill="#1a9a1a"/>
<line x1="154.4" y1="630.6" x2="204.9" y2="604.3" stroke="#8a0f0f" stroke-width="2.6"/><polygon points="216.4,598.3 206.6,607.6 203.2,601.0" fill="#8a0f0f"/>
<line x1="154.4" y1="630.6" x2="154.2" y2="581.4" stroke="#0a0a88" stroke-width="3.0"/><polygon points="154.2,569.4 157.9,581.4 150.5,581.4" fill="#0a0a88"/>
</svg>
</div>
<div id="right" class="abs"></div>
<div id="bottom" class="abs"></div>
<div id="sep" class="abs"></div>
<div id="status" class="abs"></div>
<div id="task" class="abs"></div>
<svg class="abs" style="left:0;top:0" width="720" height="720" viewBox="0 0 720 720">
<rect x="671.7" y="655" width="3.6" height="1" fill="#9a9a9a"/><rect x="686.4" y="655" width="3.6" height="1" fill="#9a9a9a"/>
<rect x="673.4" y="648" width="1.2" height="1" fill="#dedede"/><rect x="686.8" y="648" width="1" height="1" fill="#dedede"/>
<rect x="671.7" y="640" width="3.6" height="1" fill="#9a9a9a"/><rect x="686.4" y="640" width="3.6" height="1" fill="#9a9a9a"/>
<rect x="673" y="633" width="2" height="1" fill="#c0c0c0"/><rect x="686.6" y="633" width="1.6" height="1" fill="#c0c0c0"/>
<rect x="672" y="625" width="3" height="2" fill="#cfcfcf"/><rect x="686.6" y="625" width="3" height="2" fill="#c4c4c4"/>
<rect x="671.7" y="619" width="3.6" height="1" fill="#9a9a9a"/><rect x="686.4" y="619" width="3.6" height="1" fill="#9a9a9a"/>
<rect x="673.4" y="611" width="1.2" height="1" fill="#dedede"/><rect x="686.8" y="611" width="1" height="1" fill="#dedede"/>
<rect x="671.7" y="604" width="3.6" height="1" fill="#9a9a9a"/><rect x="686.4" y="604" width="3.6" height="1" fill="#9a9a9a"/>
<rect x="673" y="597" width="2" height="1" fill="#c0c0c0"/><rect x="686.6" y="597" width="1.6" height="1" fill="#c0c0c0"/>
<rect x="672" y="589" width="3" height="2" fill="#cfcfcf"/><rect x="686.6" y="589" width="3" height="2" fill="#c4c4c4"/>
<rect x="671.7" y="582" width="3.6" height="1" fill="#9a9a9a"/><rect x="686.4" y="582" width="3.6" height="1" fill="#9a9a9a"/>
<rect x="673.4" y="575" width="1.2" height="1" fill="#dedede"/><rect x="686.8" y="575" width="1" height="1" fill="#dedede"/>
<rect x="671.7" y="568" width="3.6" height="1" fill="#9a9a9a"/><rect x="686.4" y="568" width="3.6" height="1" fill="#9a9a9a"/>
<rect x="673" y="561" width="2" height="1" fill="#c0c0c0"/><rect x="686.6" y="561" width="1.6" height="1" fill="#c0c0c0"/>
<rect x="672" y="552" width="3" height="2" fill="#cfcfcf"/><rect x="686.6" y="552" width="3" height="2" fill="#c4c4c4"/>
<rect x="671.7" y="546" width="3.6" height="1" fill="#9a9a9a"/><rect x="686.4" y="546" width="3.6" height="1" fill="#9a9a9a"/>
<rect x="673.4" y="539" width="1.2" height="1" fill="#dedede"/><rect x="686.8" y="539" width="1" height="1" fill="#dedede"/>
<rect x="671.7" y="532" width="3.6" height="1" fill="#9a9a9a"/><rect x="686.4" y="532" width="3.6" height="1" fill="#9a9a9a"/>
<rect x="673" y="524" width="2" height="1" fill="#c0c0c0"/><rect x="686.6" y="524" width="1.6" height="1" fill="#c0c0c0"/>
<rect x="672" y="516" width="3" height="2" fill="#cfcfcf"/><rect x="686.6" y="516" width="3" height="2" fill="#c4c4c4"/>
<rect x="671.7" y="510" width="3.6" height="1" fill="#9a9a9a"/><rect x="686.4" y="510" width="3.6" height="1" fill="#9a9a9a"/>
<rect x="673.4" y="503" width="1.2" height="1" fill="#dedede"/><rect x="686.8" y="503" width="1" height="1" fill="#dedede"/>
<rect x="671.7" y="495" width="3.6" height="1" fill="#9a9a9a"/><rect x="686.4" y="495" width="3.6" height="1" fill="#9a9a9a"/>
<rect x="673" y="488" width="2" height="1" fill="#c0c0c0"/><rect x="686.6" y="488" width="1.6" height="1" fill="#c0c0c0"/>
<rect x="672" y="480" width="3" height="2" fill="#cfcfcf"/><rect x="686.6" y="480" width="3" height="2" fill="#c4c4c4"/>
<rect x="671.7" y="474" width="3.6" height="1" fill="#9a9a9a"/><rect x="686.4" y="474" width="3.6" height="1" fill="#9a9a9a"/>
<rect x="673.4" y="467" width="1.2" height="1" fill="#dedede"/><rect x="686.8" y="467" width="1" height="1" fill="#dedede"/>
<rect x="671.7" y="459" width="3.6" height="1" fill="#9a9a9a"/><rect x="686.4" y="459" width="3.6" height="1" fill="#9a9a9a"/>
<rect x="673" y="452" width="2" height="1" fill="#c0c0c0"/><rect x="686.6" y="452" width="1.6" height="1" fill="#c0c0c0"/>
<rect x="672" y="444" width="3" height="2" fill="#cfcfcf"/><rect x="686.6" y="444" width="3" height="2" fill="#c4c4c4"/>
<rect x="671.7" y="438" width="3.6" height="1" fill="#9a9a9a"/><rect x="686.4" y="438" width="3.6" height="1" fill="#9a9a9a"/>
<rect x="673.4" y="430" width="1.2" height="1" fill="#dedede"/><rect x="686.8" y="430" width="1" height="1" fill="#dedede"/>
<rect x="671.7" y="423" width="3.6" height="1" fill="#9a9a9a"/><rect x="686.4" y="423" width="3.6" height="1" fill="#9a9a9a"/>
<rect x="673" y="416" width="2" height="1" fill="#c0c0c0"/><rect x="686.6" y="416" width="1.6" height="1" fill="#c0c0c0"/>
<rect x="672" y="408" width="3" height="2" fill="#cfcfcf"/><rect x="686.6" y="408" width="3" height="2" fill="#c4c4c4"/>
<rect x="671.7" y="401" width="3.6" height="1" fill="#9a9a9a"/><rect x="686.4" y="401" width="3.6" height="1" fill="#9a9a9a"/>
<rect x="673.4" y="394" width="1.2" height="1" fill="#dedede"/><rect x="686.8" y="394" width="1" height="1" fill="#dedede"/>
<rect x="671.7" y="387" width="3.6" height="1" fill="#9a9a9a"/><rect x="686.4" y="387" width="3.6" height="1" fill="#9a9a9a"/>
<rect x="673" y="380" width="2" height="1" fill="#c0c0c0"/><rect x="686.6" y="380" width="1.6" height="1" fill="#c0c0c0"/>
<rect x="672" y="371" width="3" height="2" fill="#cfcfcf"/><rect x="686.6" y="371" width="3" height="2" fill="#c4c4c4"/>
<rect x="671.7" y="365" width="3.6" height="1" fill="#9a9a9a"/><rect x="686.4" y="365" width="3.6" height="1" fill="#9a9a9a"/>
<rect x="673.4" y="358" width="1.2" height="1" fill="#dedede"/><rect x="686.8" y="358" width="1" height="1" fill="#dedede"/>
<rect x="671.7" y="351" width="3.6" height="1" fill="#9a9a9a"/><rect x="686.4" y="351" width="3.6" height="1" fill="#9a9a9a"/>
<rect x="673" y="343" width="2" height="1" fill="#c0c0c0"/><rect x="686.6" y="343" width="1.6" height="1" fill="#c0c0c0"/>
<rect x="672" y="335" width="3" height="2" fill="#cfcfcf"/><rect x="686.6" y="335" width="3" height="2" fill="#c4c4c4"/>
<rect x="671.7" y="329" width="3.6" height="1" fill="#9a9a9a"/><rect x="686.4" y="329" width="3.6" height="1" fill="#9a9a9a"/>
<rect x="673.4" y="322" width="1.2" height="1" fill="#dedede"/><rect x="686.8" y="322" width="1" height="1" fill="#dedede"/>
<rect x="671.7" y="314" width="3.6" height="1" fill="#9a9a9a"/><rect x="686.4" y="314" width="3.6" height="1" fill="#9a9a9a"/>
<rect x="673" y="307" width="2" height="1" fill="#c0c0c0"/><rect x="686.6" y="307" width="1.6" height="1" fill="#c0c0c0"/>
<rect x="672" y="299" width="3" height="2" fill="#cfcfcf"/><rect x="686.6" y="299" width="3" height="2" fill="#c4c4c4"/>
<rect x="671.7" y="293" width="3.6" height="1" fill="#9a9a9a"/><rect x="686.4" y="293" width="3.6" height="1" fill="#9a9a9a"/>
<rect x="673.4" y="285" width="1.2" height="1" fill="#dedede"/><rect x="686.8" y="285" width="1" height="1" fill="#dedede"/>
<rect x="671.7" y="278" width="3.6" height="1" fill="#9a9a9a"/><rect x="686.4" y="278" width="3.6" height="1" fill="#9a9a9a"/>
<rect x="673" y="271" width="2" height="1" fill="#c0c0c0"/><rect x="686.6" y="271" width="1.6" height="1" fill="#c0c0c0"/>
<rect x="672" y="263" width="3" height="2" fill="#cfcfcf"/><rect x="686.6" y="263" width="3" height="2" fill="#c4c4c4"/>
<rect x="671.7" y="256" width="3.6" height="1" fill="#9a9a9a"/><rect x="686.4" y="256" width="3.6" height="1" fill="#9a9a9a"/>
<rect x="673.4" y="249" width="1.2" height="1" fill="#dedede"/><rect x="686.8" y="249" width="1" height="1" fill="#dedede"/>
<rect x="671.7" y="242" width="3.6" height="1" fill="#9a9a9a"/><rect x="686.4" y="242" width="3.6" height="1" fill="#9a9a9a"/>
<rect x="673" y="235" width="2" height="1" fill="#c0c0c0"/><rect x="686.6" y="235" width="1.6" height="1" fill="#c0c0c0"/>
<rect x="672" y="227" width="3" height="2" fill="#cfcfcf"/><rect x="686.6" y="227" width="3" height="2" fill="#c4c4c4"/>
<rect x="671.7" y="220" width="3.6" height="1" fill="#9a9a9a"/><rect x="686.4" y="220" width="3.6" height="1" fill="#9a9a9a"/>
<rect x="673.4" y="213" width="1.2" height="1" fill="#dedede"/><rect x="686.8" y="213" width="1" height="1" fill="#dedede"/>
<rect x="671.7" y="206" width="3.6" height="1" fill="#9a9a9a"/><rect x="686.4" y="206" width="3.6" height="1" fill="#9a9a9a"/>
<rect x="673" y="199" width="2" height="1" fill="#c0c0c0"/><rect x="686.6" y="199" width="1.6" height="1" fill="#c0c0c0"/>
<rect x="672" y="190" width="3" height="2" fill="#cfcfcf"/><rect x="686.6" y="190" width="3" height="2" fill="#c4c4c4"/>
<rect x="671.7" y="184" width="3.6" height="1" fill="#9a9a9a"/><rect x="686.4" y="184" width="3.6" height="1" fill="#9a9a9a"/>
<rect x="673.4" y="177" width="1.2" height="1" fill="#dedede"/><rect x="686.8" y="177" width="1" height="1" fill="#dedede"/>
<rect x="671.7" y="170" width="3.6" height="1" fill="#9a9a9a"/><rect x="686.4" y="170" width="3.6" height="1" fill="#9a9a9a"/>
<rect x="673" y="162" width="2" height="1" fill="#c0c0c0"/><rect x="686.6" y="162" width="1.6" height="1" fill="#c0c0c0"/>
<rect x="672" y="154" width="3" height="2" fill="#cfcfcf"/><rect x="686.6" y="154" width="3" height="2" fill="#c4c4c4"/>
<rect x="671.7" y="148" width="3.6" height="1" fill="#9a9a9a"/><rect x="686.4" y="148" width="3.6" height="1" fill="#9a9a9a"/>
<rect x="673.4" y="141" width="1.2" height="1" fill="#dedede"/><rect x="686.8" y="141" width="1" height="1" fill="#dedede"/>
<rect x="671.7" y="133" width="3.6" height="1" fill="#9a9a9a"/><rect x="686.4" y="133" width="3.6" height="1" fill="#9a9a9a"/>
<rect x="673" y="126" width="2" height="1" fill="#c0c0c0"/><rect x="686.6" y="126" width="1.6" height="1" fill="#c0c0c0"/>
<rect x="672" y="118" width="3" height="2" fill="#cfcfcf"/><rect x="686.6" y="118" width="3" height="2" fill="#c4c4c4"/>
<rect x="671.7" y="112" width="3.6" height="1" fill="#9a9a9a"/><rect x="686.4" y="112" width="3.6" height="1" fill="#9a9a9a"/>
<rect x="673.4" y="104" width="1.2" height="1" fill="#dedede"/><rect x="686.8" y="104" width="1" height="1" fill="#dedede"/>
<rect x="671.7" y="97" width="3.6" height="1" fill="#9a9a9a"/><rect x="686.4" y="97" width="3.6" height="1" fill="#9a9a9a"/>
<rect x="673" y="90" width="2" height="1" fill="#c0c0c0"/><rect x="686.6" y="90" width="1.6" height="1" fill="#c0c0c0"/>
<rect x="672" y="82" width="3" height="2" fill="#cfcfcf"/><rect x="686.6" y="82" width="3" height="2" fill="#c4c4c4"/>
<rect x="671.7" y="75" width="3.6" height="1" fill="#9a9a9a"/><rect x="686.4" y="75" width="3.6" height="1" fill="#9a9a9a"/>
<rect x="673.4" y="68" width="1.2" height="1" fill="#dedede"/><rect x="686.8" y="68" width="1" height="1" fill="#dedede"/>
<rect x="671.7" y="61" width="3.6" height="1" fill="#9a9a9a"/><rect x="686.4" y="61" width="3.6" height="1" fill="#9a9a9a"/>
<rect x="673" y="54" width="2" height="1" fill="#c0c0c0"/><rect x="686.6" y="54" width="1.6" height="1" fill="#c0c0c0"/>
<!-- vertical slider -->
<rect x="680" y="52" width="1.8" height="604" fill="#ed6b21"/>
<polygon points="675.8,54 685.8,54 680.9,49" fill="#ed6b21"/>
<polygon points="675.8,655.6 685.4,655.6 680.6,659.8" fill="#ed6b21"/>
<!-- horizontal slider -->
<rect x="28" y="658.1" width="609" height="1.8" fill="#ed6b21"/>
<polygon points="25,659 29.5,654.4 29.5,663.6" fill="#ed6b21"/>
<polygon points="639.6,659 635,654.4 635,663.6" fill="#ed6b21"/>
<!-- dropdown -->
<rect x="-1" y="650.5" width="18" height="15" fill="#e5e5e5" stroke="#cfcfcf" stroke-width="1"/>
<path d="M9,656.5 L11.5,659.5 L14,656.5" fill="none" stroke="#444" stroke-width="1.3"/>
<!-- lock -->
<rect x="676.5" y="668.3" width="8.6" height="5" rx=".6" fill="#ed6b21"/>
<path d="M677.5,668.6 V666.6 Q677.5,664.8 680.5,664.8 Q683.6,664.8 683.6,667" fill="none" stroke="#ed6b21" stroke-width="1.7"/>
<rect x="680.1" y="670.2" width="1.2" height="1.5" fill="#fff"/>
<!-- gear -->
<circle cx="710.6" cy="668.5" r="3.9" fill="none" stroke="#777" stroke-width="1.4" stroke-dasharray="1.6 1.46"/>
<circle cx="710.6" cy="668.5" r="3.3" fill="#fff" stroke="#888" stroke-width=".7"/>
<circle cx="710.6" cy="668.5" r="2.3" fill="#fff" stroke="#f0905a" stroke-width="1"/>
</svg>
<div class="tl" style="top:55.5px">24.90</div>
<div class="tl" style="top:77.3px">24.00</div>
<div class="tl" style="top:91.8px">23.40</div>
<div class="tl" style="top:113.5px">22.50</div>
<div class="tl" style="top:128.0px">21.90</div>
<div class="tl" style="top:149.7px">21.00</div>
<div class="tl" style="top:164.2px">20.40</div>
<div class="tl" style="top:185.9px">19.50</div>
<div class="tl" style="top:200.4px">18.90</div>
<div class="tl" style="top:222.1px">18.00</div>
<div class="tl" style="top:236.6px">17.40</div>
<div class="tl" style="top:258.3px">16.50</div>
<div class="tl" style="top:272.8px">15.90</div>
<div class="tl" style="top:294.5px">15.00</div>
<div class="tl" style="top:309.0px">14.40</div>
<div class="tl" style="top:330.7px">13.50</div>
<div class="tl" style="top:345.2px">12.90</div>
<div class="tl" style="top:367.0px">12.00</div>
<div class="tl" style="top:381.4px">11.40</div>
<div class="tl" style="top:403.2px">10.50</div>
<div class="tl" style="top:417.7px">9.90</div>
<div class="tl" style="top:439.4px">9.00</div>
<div class="tl" style="top:453.9px">8.40</div>
<div class="tl" style="top:475.6px">7.50</div>
<div class="tl" style="top:490.1px">6.90</div>
<div class="tl" style="top:511.8px">6.00</div>
<div class="tl" style="top:526.3px">5.40</div>
<div class="tl" style="top:548.0px">4.50</div>
<div class="tl" style="top:562.5px">3.90</div>
<div class="tl" style="top:584.2px">3.00</div>
<div class="tl" style="top:598.7px">2.40</div>
<div class="tl" style="top:620.4px">1.50</div>
<div class="tl" style="top:634.9px">0.90</div>
<div class="bl" style="left:651.3px;top:44.6px">25.20</div>
<div class="bl" style="left:651.3px;top:54.7px">(84)</div>
<div class="bl" style="left:692px;top:644.5px">0.30</div>
<div class="tl" style="top:649.5px;color:#c8c8c8">0.30</div>
<div class="bl" style="left:692px;top:654.6px">(1)</div>
<div class="bl" style="left:610.3px;top:642.3px">162391</div>
<div class="bl" style="left:31px;top:665.1px">162365</div>
</body></html>
